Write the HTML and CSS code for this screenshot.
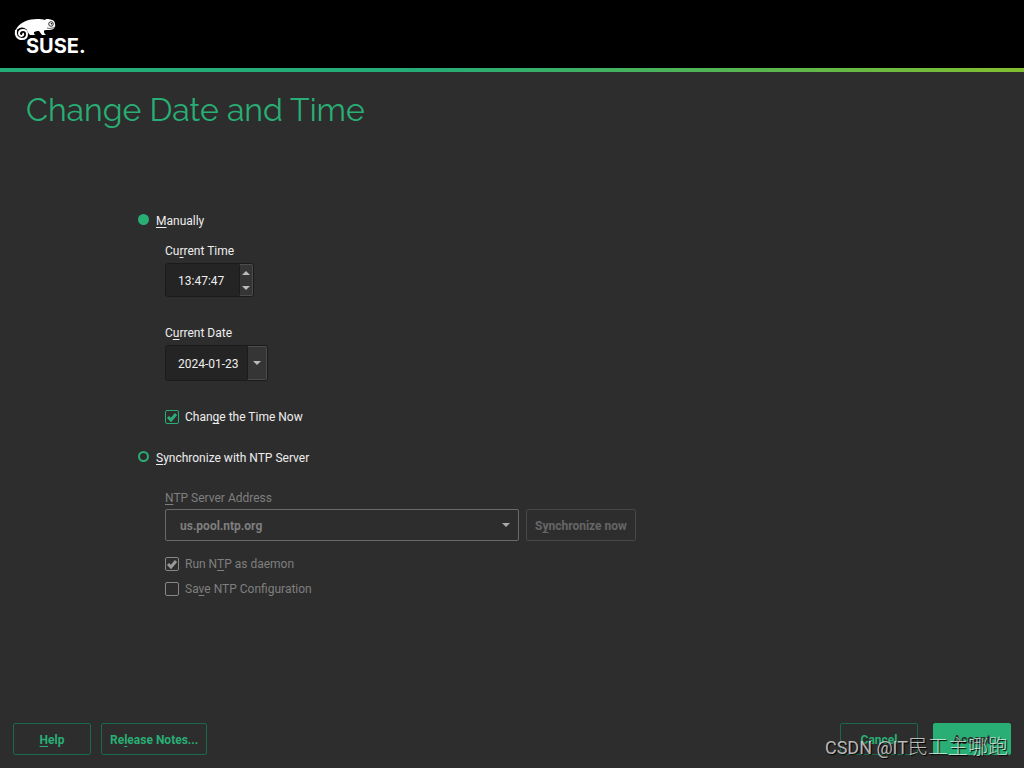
FILE: index.html
```
<!DOCTYPE html>
<html lang="en">
<head>
    <meta charset="UTF-8">
    <meta name="viewport" content="width=device-width, initial-scale=1">
    <title>Change Date and Time</title>
    <link rel="stylesheet" href="styles.css">
</head>
<body>
<header class="banner">
    <svg class="logo" width="80" height="42" viewBox="0 0 80 42" role="img" aria-label="SUSE">
        <path fill="#fff" d="M1 16C1 9 8 3 17 1.500c6-1 10-.5 14 .5l1-1c3 0 6 .5 8 2 1 2 1.500 4 1 6-1 2-3 3-6 3-2 0-4 0-5 .5 0 2 0 3 2 4.500h-4c-1-1-2-3-3-4-2 0-4 .5-5 1 0 1 0 2 1 3h-5c-1-1-2-2-2-3l-6-1z"/>
        <circle cx="8" cy="15.500" r="6" fill="#000"/>
        <path fill="none" stroke="#fff" stroke-width="2" d="M2 12c-1 5 1 9 6 9 3 0 5-2 5-5s-2-4-4-4c-3 0-4 2-4 3.500 0 2 2 3 3.500 2 1-.5 1-1.500 0-2"/>
        <circle cx="37" cy="6" r="2.300" fill="none" stroke="#000" stroke-width=".8"/>
        <circle cx="37.500" cy="5.800" r=".8" fill="#000"/>
        <path fill="none" stroke="#000" stroke-width=".6" d="M33 10c3 1 6 0 8-1"/>
        <text class="logo-text" x="12" y="35">SUSE.</text>
    </svg>
</header>
<main class="content">
    <h1>Change Date and Time</h1>
    <form id="timeForm" action="#">
        <div class="choice">
            <input type="radio" id="manual" name="mode" checked>
            <label for="manual"><u>M</u>anually</label>
        </div>
        <div class="group">
            <label for="time">Cu<u>r</u>rent Time</label>
            <div class="box time-box">
                <input type="text" id="time" value="13:47:47">
                <div class="spin">
                    <button type="button" aria-label="Up"><svg width="8" height="4" viewBox="0 0 8 4"><path d="M0 4L4 0l4 4z"/></svg></button>
                    <button type="button" aria-label="Down"><svg width="8" height="4" viewBox="0 0 8 4"><path d="M0 0h8L4 4z"/></svg></button>
                </div>
            </div>
        </div>
        <div class="group">
            <label for="date">C<u>u</u>rrent Date</label>
            <div class="box date-box">
                <input type="text" id="date" value="2024-01-23">
                <button type="button" class="drop" aria-label="Open calendar"><svg width="8" height="4" viewBox="0 0 8 4"><path d="M0 0h8L4 4z"/></svg></button>
            </div>
        </div>
        <div class="check">
            <input type="checkbox" id="changeNow" checked>
            <label for="changeNow">Chan<u>g</u>e the Time Now</label>
        </div>
        <div class="choice">
            <input type="radio" id="ntp" name="mode">
            <label for="ntp"><u>S</u>ynchronize with NTP Server</label>
        </div>
        <div class="group ntp-group">
            <label for="server"><u>N</u>TP Server Address</label>
            <div class="server-row">
                <select id="server" disabled>
                    <option>us.pool.ntp.org</option>
                </select>
                <button type="button" class="btn sync" disabled>S<u>y</u>nchronize now</button>
            </div>
        </div>
        <div class="check off">
            <input type="checkbox" id="daemon" checked disabled>
            <label for="daemon">Run N<u>T</u>P as daemon</label>
        </div>
        <div class="check off">
            <input type="checkbox" id="save" disabled>
            <label for="save">Sa<u>v</u>e NTP Configuration</label>
        </div>
    </form>
</main>
<footer class="buttons">
    <button type="button" class="btn"><u>H</u>elp</button>
    <button type="button" class="btn">Re<u>l</u>ease Notes...</button>
    <button type="button" class="btn cancel">Cancel</button>
    <button type="submit" form="timeForm" class="btn accept">Accept</button>
</footer>
<div class="watermark"><span>CSDN @IT</span>民工主哪跑</div>
</body>
</html>
```
FILE: styles.css
```
*{
    box-sizing:border-box;
}
body{
    margin:0;
    min-height:100vh;
    display:flex;
    flex-direction:column;
    position:relative;
    background-color:#2d2d2d;
    color:#eee;
    font:12px/16px Roboto, "Noto Sans CJK SC", sans-serif;
}
input,select,button{
    font:inherit;
    color:inherit;
    margin:0;
}
u{
    text-decoration-thickness:1px;
    text-underline-offset:2px;
    text-decoration-skip-ink:none;
}
.banner{
    padding:18px 14px 8px;
    background-color:#000;
    border-bottom:4px solid;
    border-image:linear-gradient(to right, #23ab78 40%, #82bf30) 1;
}
.logo{
    display:block;
    overflow:visible;
}
.logo-text{
    font:bold 20px Inter, sans-serif;
    fill:#fff;
}
.content{
    flex:1;
    padding:16px 26px;
}
h1{
    margin:0 0 79px;
    font:400 32px/44px Raleway, Lato, sans-serif;
    color:#29ae75;
}
#timeForm{
    padding-left:112px;
}
.choice,.check{
    display:flex;
    align-items:center;
}
.choice label{
    padding-top:2px;
}
.choice{
    gap:7px;
    margin-bottom:14px;
}
.check{
    gap:6px;
    margin-left:27px;
    margin-bottom:23px;
}
input[type="radio"],input[type="checkbox"]{
    appearance:none;
}
input[type="radio"]{
    width:11px;
    height:11px;
    margin-bottom:2px;
    border:2px solid #29ae75;
    border-radius:50%;
}
input[type="radio"]:checked{
    background-color:#29ae75;
}
input[type="checkbox"]{
    width:14px;
    height:14px;
    border:1px solid #29ae75;
    border-radius:2px;
}
input[type="checkbox"]:checked{
    background:url("data:image/svg+xml,%3Csvg xmlns='http://www.w3.org/2000/svg' viewBox='0 0 12 12'%3E%3Cpath d='M2 6l3 3 5-6' fill='none' stroke='%2329ae75' stroke-width='3'/%3E%3C/svg%3E");
}
.group{
    margin:0 0 28px 27px;
}
.group label{
    display:block;
    margin-bottom:4px;
}
.box{
    display:flex;
    background-color:#242424;
    border:1px solid #1b1b1b;
    border-radius:3px;
}
.box input{
    flex:1;
    min-width:0;
    padding:2px 0 0 12px;
    border:0;
    background:none;
}
.time-box{
    width:89px;
    height:34px;
}
.date-box{
    width:103px;
    height:36px;
}
.spin{
    display:flex;
    flex-direction:column;
    width:14px;
    border:1px solid #4c4c4c;
    border-left-color:#1b1b1b;
    border-radius:0 2px 2px 0;
    background-color:#353535;
}
.spin button,.drop{
    display:flex;
    flex:1;
    align-items:center;
    justify-content:center;
    padding:0;
    border:0;
    background:none;
}
.box .drop{
    flex:none;
    width:20px;
    border:1px solid #4c4c4c;
    border-left-color:#1b1b1b;
    border-radius:0 2px 2px 0;
    background-color:#353535;
}
.box svg{
    fill:#bbb;
}
.ntp-group{
    margin-top:24px;
    margin-bottom:15px;
    color:#7f7f7f;
}
.ntp-group label{
    margin-bottom:3px;
}
.server-row{
    display:flex;
    gap:7px;
}
select{
    appearance:none;
    width:354px;
    height:32px;
    padding:2px 14px 0;
    border:1px solid #6a6a6a;
    border-radius:2px;
    font-weight:bold;
    opacity:1;
    background:url("data:image/svg+xml,%3Csvg xmlns='http://www.w3.org/2000/svg' width='8' height='4'%3E%3Cpath d='M0 0h8L4 4z' fill='%23aaa'/%3E%3C/svg%3E") no-repeat right 8px center;
}
.off{
    color:#7f7f7f;
    margin-bottom:9px;
}
.off input[type="checkbox"]{
    border-color:#888;
}
.off input[type="checkbox"]:checked{
    background-image:url("data:image/svg+xml,%3Csvg xmlns='http://www.w3.org/2000/svg' viewBox='0 0 12 12'%3E%3Cpath d='M2 6l3 3 5-6' fill='none' stroke='%23999' stroke-width='3'/%3E%3C/svg%3E");
}
.btn{
    min-width:78px;
    height:32px;
    padding:2px 8px 0;
    border:1px solid #19694a;
    border-radius:2px;
    background:none;
    color:#29ae75;
    font-weight:bold;
}
.sync{
    width:110px;
    border-color:#474747;
    color:#666;
}
.buttons{
    display:flex;
    gap:10px;
    padding:0 13px 13px;
}
.cancel{
    margin-left:auto;
}
.accept{
    margin-left:5px;
    border-color:#29ae75;
    background-color:#29ae75;
    color:#2d2d2d;
}
/* overlaps the footer buttons */
.watermark{
    position:absolute;
    right:16px;
    bottom:8px;
    font:300 20px/24px "Noto Sans CJK SC", sans-serif;
    color:rgba(255,255,255,.7);
    text-shadow:1px 1px 1px #000;
    pointer-events:none;
}
.watermark span{
    font-family:Roboto, sans-serif;
    font-weight:400;
    font-size:18px;
}
```
